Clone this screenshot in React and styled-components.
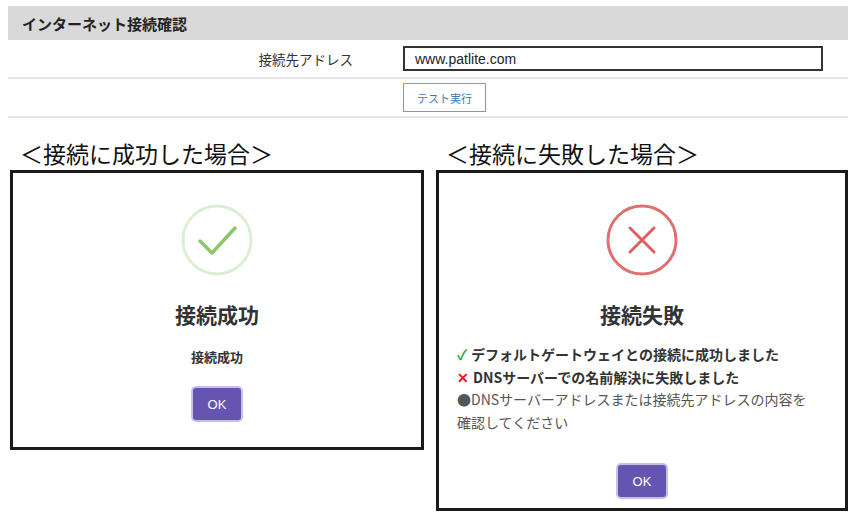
import React from 'react';
import styled, { createGlobalStyle } from 'styled-components';

const Global = createGlobalStyle`
  body { margin: 0; background: #fff; font-family: "Noto Sans CJK JP", "Liberation Sans", sans-serif; }
`;

const Page = styled.div`
  width: 858px;
  height: 519px;
  padding: 6px 10px 0 8px;
  box-sizing: border-box;
  overflow: hidden;
`;

const Panel = styled.div`
  width: 840px;
`;

const PanelHeader = styled.div`
  background: #d9d9d9;
  height: 34px;
  display: flex;
  align-items: center;
  padding-left: 14px;
  font-size: 15px;
  font-weight: 700;
  color: #222;
`;

const Row = styled.div`
  display: grid;
  grid-template-columns: 345px 1fr;
  gap: 50px;
  align-items: center;
  height: 37px;
  border-bottom: 2px solid #e6e6e6;
`;

const Label = styled.div`
  text-align: right;
  font-size: 13.5px;
  color: #333;
`;

const Input = styled.div`
  height: 25px;
  border: 2px solid #333;
  display: flex;
  align-items: center;
  padding-left: 10px;
  font-family: "Liberation Sans", sans-serif;
  font-size: 14px;
  color: #222;
  box-sizing: border-box;
  width: 420px;
`;

const TestButton = styled.div`
  width: 83px;
  height: 29px;
  border: 1.5px solid #6aa0cc;
  box-sizing: border-box;
  display: flex;
  align-items: center;
  justify-content: center;
  font-size: 11px;
  color: #3a78b8;
`;

const Columns = styled.div`
  display: grid;
  grid-template-columns: 414px 412px;
  column-gap: 12px;
  margin-top: 20px;
  margin-left: 2px;
  align-items: start;
`;

const Caption = styled.div`
  font-size: 23px;
  color: #111;
  padding-left: ${p => p.$pad}px;
  height: 32px;
  line-height: 30px;
`;

const Box = styled.div`
  border: 3px solid #1a1a1a;
  height: ${p => p.$h}px;
  box-sizing: border-box;
  display: flex;
  flex-direction: column;
  align-items: center;
  padding-top: 30px;
`;

const Title = styled.div`
  font-size: 21px;
  font-weight: 700;
  color: #333;
  margin-top: 22px;
`;

const Sub = styled.div`
  font-size: 13px;
  font-weight: 700;
  color: #333;
  margin-top: 18px;
`;

const List = styled.div`
  align-self: stretch;
  padding-left: 18px;
  margin-top: 14px;
  font-size: 14px;
  line-height: 22.5px;
  color: #333;
`;

const Item = styled.div`
  font-weight: ${p => (p.$bold ? 700 : 400)};
  color: ${p => (p.$bold ? '#333' : '#555')};
`;

const Mark = styled.span`
  color: ${p => p.$c};
  margin-right: 4px;
`;

const OkButton = styled.div`
  width: 48px;
  height: 32px;
  background: #6655b0;
  border-radius: 3px;
  box-shadow: 0 0 0 2px #c7c0e6;
  color: #fff;
  font-family: "Liberation Sans", sans-serif;
  font-size: 13px;
  display: flex;
  align-items: center;
  justify-content: center;
  margin-top: ${p => p.$mt}px;
`;

const Col = styled.div``;

export default function App() {
  return (
    <Page>
      <Global />
      <Panel>
        <PanelHeader>インターネット接続確認</PanelHeader>
        <Row>
          <Label>接続先アドレス</Label>
          <Input>www.patlite.com</Input>
        </Row>
        <Row>
          <span />
          <TestButton>テスト実行</TestButton>
        </Row>
      </Panel>
      <Columns>
        <Col>
          <Caption $pad={10}>＜接続に成功した場合＞</Caption>
          <Box $h={280}>
            <svg width="74" height="74" viewBox="0 0 74 74">
              <circle cx="37" cy="37" r="34" fill="none" stroke="#dcefd2" strokeWidth="3" />
              <path d="M20 38 L32 50 L55 25" fill="none" stroke="#8cc56d" strokeWidth="3.5" strokeLinecap="round" strokeLinejoin="round" />
            </svg>
            <Title>接続成功</Title>
            <Sub>接続成功</Sub>
            <OkButton $mt={22}>OK</OkButton>
          </Box>
        </Col>
        <Col>
          <Caption $pad={10}>＜接続に失敗した場合＞</Caption>
          <Box $h={341}>
            <svg width="74" height="74" viewBox="0 0 74 74">
              <circle cx="37" cy="37" r="34" fill="none" stroke="#e07070" strokeWidth="3" />
              <path d="M25 25 L49 49 M49 25 L25 49" fill="none" stroke="#e06060" strokeWidth="3" strokeLinecap="round" />
            </svg>
            <Title>接続失敗</Title>
            <List>
              <Item $bold><Mark $c="#3aa535">✓</Mark>デフォルトゲートウェイとの接続に成功しました</Item>
              <Item $bold><Mark $c="#e02020">✕</Mark>DNSサーバーでの名前解決に失敗しました</Item>
              <Item>●DNSサーバーアドレスまたは接続先アドレスの内容を<br />確認してください</Item>
            </List>
            <OkButton $mt={32}>OK</OkButton>
          </Box>
        </Col>
      </Columns>
    </Page>
  );
}
